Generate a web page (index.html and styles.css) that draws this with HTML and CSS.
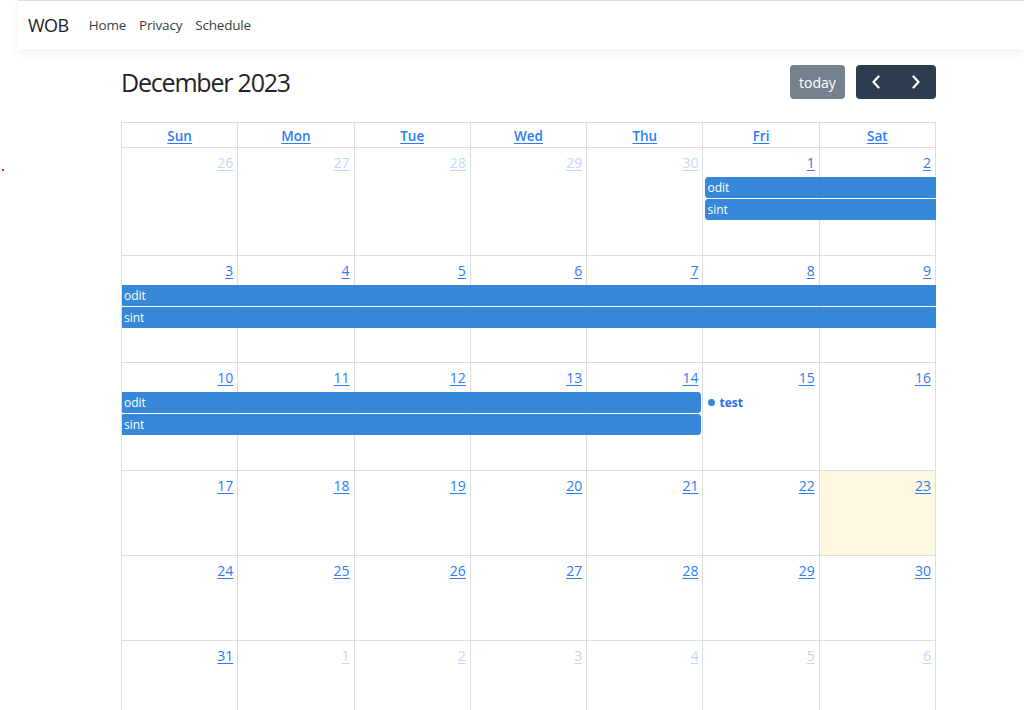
FILE: index.html
```html
<!DOCTYPE html>
<html lang="en">
<head>
<meta charset="utf-8">
<title>Schedule - WOB</title>
<link rel="stylesheet" href="styles.css">
</head>
<body>
<span class="marker"></span>
<header class="navbar">
  <a class="brand" href="#">WOB</a>
  <nav class="nav">
    <a href="#">Home</a>
    <a href="#">Privacy</a>
    <a href="#">Schedule</a>
  </nav>
</header>
<main class="page">
  <div class="toolbar">
    <h2 class="title">December 2023</h2>
    <div class="actions">
      <button class="btn btn-today" disabled>today</button>
      <div class="btn-group">
        <button class="btn btn-nav" aria-label="prev"><svg width="10" height="14" viewBox="0 0 10 14"><polyline points="7.5,1.5 2.5,7 7.5,12.5" fill="none" stroke="#fff" stroke-width="2.2" stroke-linecap="round" stroke-linejoin="round"/></svg></button>
        <button class="btn btn-nav" aria-label="next"><svg width="10" height="14" viewBox="0 0 10 14"><polyline points="2.5,1.5 7.5,7 2.5,12.5" fill="none" stroke="#fff" stroke-width="2.2" stroke-linecap="round" stroke-linejoin="round"/></svg></button>
      </div>
    </div>
  </div>

  <div class="cal">
    <div class="head">
      <div class="hcell"><a href="#">Sun</a></div>
      <div class="hcell"><a href="#">Mon</a></div>
      <div class="hcell"><a href="#">Tue</a></div>
      <div class="hcell"><a href="#">Wed</a></div>
      <div class="hcell"><a href="#">Thu</a></div>
      <div class="hcell"><a href="#">Fri</a></div>
      <div class="hcell"><a href="#">Sat</a></div>
    </div>

    <div class="week tall">
      <div class="day other"><a href="#">26</a></div>
      <div class="day other"><a href="#">27</a></div>
      <div class="day other"><a href="#">28</a></div>
      <div class="day other"><a href="#">29</a></div>
      <div class="day other"><a href="#">30</a></div>
      <div class="day"><a href="#">1</a></div>
      <div class="day"><a href="#">2</a></div>
      <div class="ev ev-start r2 c6-8">odit</div>
      <div class="ev ev-start r3 c6-8">sint</div>
    </div>

    <div class="week tall mid">
      <div class="day"><a href="#">3</a></div>
      <div class="day"><a href="#">4</a></div>
      <div class="day"><a href="#">5</a></div>
      <div class="day"><a href="#">6</a></div>
      <div class="day"><a href="#">7</a></div>
      <div class="day"><a href="#">8</a></div>
      <div class="day"><a href="#">9</a></div>
      <div class="ev r2 c1-8">odit</div>
      <div class="ev r3 c1-8">sint</div>
    </div>

    <div class="week tall">
      <div class="day"><a href="#">10</a></div>
      <div class="day"><a href="#">11</a></div>
      <div class="day"><a href="#">12</a></div>
      <div class="day"><a href="#">13</a></div>
      <div class="day"><a href="#">14</a></div>
      <div class="day"><a href="#">15</a></div>
      <div class="day"><a href="#">16</a></div>
      <div class="ev ev-end r2 c1-6">odit</div>
      <div class="ev ev-end r3 c1-6">sint</div>
      <a class="dot-ev r2 c6" href="#"><span class="dot"></span>test</a>
    </div>

    <div class="week">
      <div class="day"><a href="#">17</a></div>
      <div class="day"><a href="#">18</a></div>
      <div class="day"><a href="#">19</a></div>
      <div class="day"><a href="#">20</a></div>
      <div class="day"><a href="#">21</a></div>
      <div class="day"><a href="#">22</a></div>
      <div class="day today"><a href="#">23</a></div>
    </div>

    <div class="week">
      <div class="day"><a href="#">24</a></div>
      <div class="day"><a href="#">25</a></div>
      <div class="day"><a href="#">26</a></div>
      <div class="day"><a href="#">27</a></div>
      <div class="day"><a href="#">28</a></div>
      <div class="day"><a href="#">29</a></div>
      <div class="day"><a href="#">30</a></div>
    </div>

    <div class="week">
      <div class="day"><a href="#">31</a></div>
      <div class="day other"><a href="#">1</a></div>
      <div class="day other"><a href="#">2</a></div>
      <div class="day other"><a href="#">3</a></div>
      <div class="day other"><a href="#">4</a></div>
      <div class="day other"><a href="#">5</a></div>
      <div class="day other"><a href="#">6</a></div>
    </div>
  </div>
</main>
</body>
</html>
```

FILE: styles.css
```css
html, body {
  margin: 0;
  padding: 0;
  background: #fff;
}
body {
  font-family: "Open Sans", "Noto Sans", sans-serif;
  color: #212529;
  overflow: hidden;
  height: 710px;
  position: relative;
}
a { text-decoration: none; }

.marker {
  position: absolute;
  left: 2px;
  top: 169px;
  width: 2px;
  height: 2px;
  background: #e8141c;
}

.navbar {
  margin-left: 18px;
  height: 48px;
  border-top: 1px solid #dcdcdc;
  box-shadow: 0 4px 10px rgba(0, 0, 0, 0.06);
  display: flex;
  align-items: center;
  padding-left: 10px;
}
.brand {
  font-size: 18px;
  color: #1e2226;
  letter-spacing: -0.5px;
  margin-right: 20px;
}
.nav {
  display: flex;
  gap: 13px;
}
.nav a {
  font-size: 13.5px;
  color: #3b3e42;
  letter-spacing: -0.2px;
}

.page {
  padding-left: 121px;
  width: 815px;
}

.toolbar {
  display: flex;
  justify-content: space-between;
  align-items: center;
  margin-top: 16px;
  height: 34px;
  margin-bottom: 23px;
}
.title {
  margin: 0;
  font-size: 25px;
  font-weight: 400;
  color: #212529;
  letter-spacing: -1.2px;
}
.actions {
  display: flex;
  gap: 11px;
}
.btn {
  border: 0;
  height: 34px;
  color: #fff;
  background: #2c3e50;
  font-family: inherit;
  border-radius: 4px;
  padding: 0;
  display: flex;
  align-items: center;
  justify-content: center;
}
.btn-today {
  width: 55px;
  font-size: 14px;
  opacity: 0.65;
}
.btn-group {
  display: flex;
  background: #2c3e50;
  border-radius: 4px;
}
.btn-nav {
  width: 40px;
  background: transparent;
}

.cal {
  border-top: 1px solid #dddddd;
  border-left: 1px solid #dddddd;
  width: 814px;
}
.head {
  display: grid;
  grid-template-columns: repeat(7, minmax(0, 1fr));
  border-bottom: 1px solid #dddddd;
}
.hcell {
  box-sizing: border-box;
  height: 24px;
  border-right: 1px solid #dddddd;
  display: flex;
  align-items: center;
  justify-content: center;
  padding-top: 2px;
}
.hcell a {
  color: #2b7cf6;
  font-weight: 600;
  font-size: 13.5px;
  text-decoration: underline;
  text-underline-offset: 2px;
}

.week {
  display: grid;
  grid-template-columns: repeat(7, minmax(0, 1fr));
  grid-template-rows: 29px 22px 22px 1fr;
  height: 84px;
  border-bottom: 1px solid #dddddd;
}
.week.tall { height: 107px; }
.week.tall.mid { height: 106px; }

.day {
  grid-row: 1 / -1;
  border-right: 1px solid #dddddd;
  display: flex;
  justify-content: flex-end;
  align-items: flex-start;
  padding: 4px 4px 0 0;
}
.day:nth-child(1) { grid-column: 1; }
.day:nth-child(2) { grid-column: 2; }
.day:nth-child(3) { grid-column: 3; }
.day:nth-child(4) { grid-column: 4; }
.day:nth-child(5) { grid-column: 5; }
.day:nth-child(6) { grid-column: 6; }
.day:nth-child(7) { grid-column: 7; }
.day a {
  color: #2b7cf6;
  font-size: 14px;
  line-height: 21px;
  text-decoration: underline;
  text-underline-offset: 2px;
}
.day.other a { opacity: 0.3; }
.day.today { background: #fef8e0; }

.ev {
  height: 21px;
  box-sizing: border-box;
  background: #3788d8;
  border: 1px solid #3788d8;
  color: #fff;
  font-size: 12px;
  line-height: 19px;
  padding-left: 1px;
  z-index: 1;
  overflow: hidden;
  white-space: nowrap;
}
.ev-start {
  margin-left: 2px;
  border-radius: 3px 0 0 3px;
}
.ev-end {
  margin-right: 2px;
  border-radius: 0 3px 3px 0;
}
.r2 { grid-row: 2; }
.r3 { grid-row: 3; }
.c1-8 { grid-column: 1 / 8; }
.c6-8 { grid-column: 6 / 8; }
.c1-6 { grid-column: 1 / 6; }
.c6 { grid-column: 6; }

.dot-ev {
  z-index: 1;
  display: flex;
  align-items: center;
  height: 21px;
  padding-left: 5px;
  color: #2b6de6;
  font-size: 12px;
  font-weight: 700;
}
.dot {
  width: 7px;
  height: 7px;
  border-radius: 50%;
  background: #3788d8;
  margin-right: 4px;
}
```
